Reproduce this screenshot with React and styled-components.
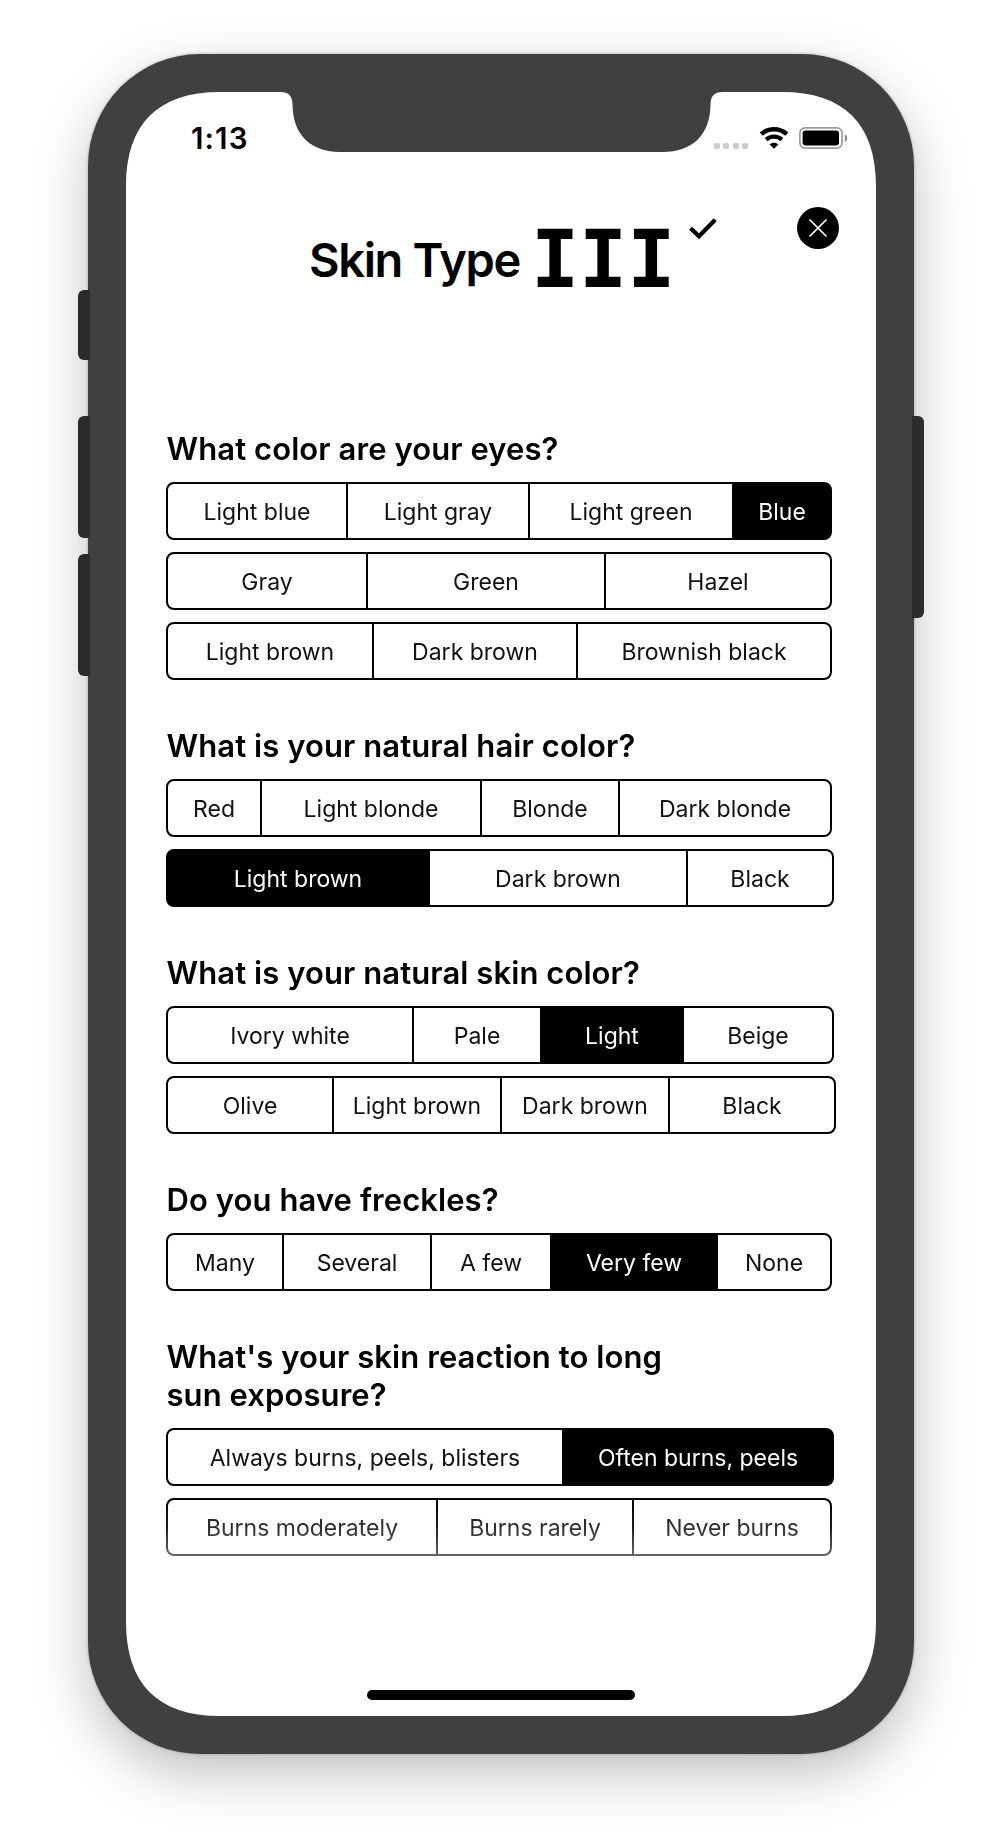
import React, { useState } from "react";
import styled, { createGlobalStyle } from "styled-components";

// width is the outer width of each segment, neighbours share a 2px border
const QUESTIONS = [
  {
    id: "eyes",
    title: "What color are your eyes?",
    rows: [
      [
        { label: "Light blue", width: 182 },
        { label: "Light gray", width: 184 },
        { label: "Light green", width: 206 },
        { label: "Blue", width: 100 },
      ],
      [
        { label: "Gray", width: 202 },
        { label: "Green", width: 240 },
        { label: "Hazel", width: 228 },
      ],
      [
        { label: "Light brown", width: 208 },
        { label: "Dark brown", width: 206 },
        { label: "Brownish black", width: 256 },
      ],
    ],
  },
  {
    id: "hair",
    title: "What is your natural hair color?",
    rows: [
      [
        { label: "Red", width: 96 },
        { label: "Light blonde", width: 222 },
        { label: "Blonde", width: 140 },
        { label: "Dark blonde", width: 214 },
      ],
      [
        { label: "Light brown", width: 264 },
        { label: "Dark brown", width: 260 },
        { label: "Black", width: 148 },
      ],
    ],
  },
  {
    id: "skin",
    title: "What is your natural skin color?",
    rows: [
      [
        { label: "Ivory white", width: 248 },
        { label: "Pale", width: 130 },
        { label: "Light", width: 144 },
        { label: "Beige", width: 152 },
      ],
      [
        { label: "Olive", width: 168 },
        { label: "Light brown", width: 170 },
        { label: "Dark brown", width: 170 },
        { label: "Black", width: 168 },
      ],
    ],
  },
  {
    id: "freckles",
    title: "Do you have freckles?",
    rows: [
      [
        { label: "Many", width: 118 },
        { label: "Several", width: 150 },
        { label: "A few", width: 122 },
        { label: "Very few", width: 168 },
        { label: "None", width: 116 },
      ],
    ],
  },
  {
    id: "reaction",
    title: "What's your skin reaction to long sun exposure?",
    rows: [
      [
        { label: "Always burns, peels, blisters", width: 398 },
        { label: "Often burns, peels", width: 272 },
      ],
      [
        { label: "Burns moderately", width: 272 },
        { label: "Burns rarely", width: 198 },
        { label: "Never burns", width: 200 },
      ],
    ],
  },
];

const App = () => {
  const [answers, setAnswers] = useState({
    eyes: "Blue",
    hair: "Light brown",
    skin: "Light",
    freckles: "Very few",
    reaction: "Often burns, peels",
  });

  const choose = (id, label) => setAnswers({ ...answers, [id]: label });

  return (
    <Page>
      <GlobalStyle />
      <Phone>
        <SideButton $side="left" $top={236} $height={70} />
        <SideButton $side="left" $top={362} $height={122} />
        <SideButton $side="left" $top={500} $height={122} />
        <SideButton $side="right" $top={362} $height={202} />

        <Screen>
          <StatusBar>
            <Time>1:13</Time>
            <StatusIcons>
              <SignalDots>
                <i />
                <i />
                <i />
                <i />
              </SignalDots>
              <WifiIcon />
              <BatteryIcon />
            </StatusIcons>
          </StatusBar>

          <Header>
            <Title>
              Skin Type <Numeral>III</Numeral>
            </Title>
            <CheckIcon />
            <CloseButton aria-label="Close">
              <svg width="18" height="18" viewBox="0 0 18 18">
                <path
                  d="M1 1L17 17M17 1L1 17"
                  stroke="#fff"
                  strokeWidth="1.7"
                  strokeLinecap="round"
                />
              </svg>
            </CloseButton>
          </Header>

          <Questions>
            {QUESTIONS.map((question) => (
              <Question key={question.id}>
                <QuestionTitle>{question.title}</QuestionTitle>
                <Rows>
                  {question.rows.map((row, index) => (
                    <Row key={index}>
                      {row.map(({ label, width }) => (
                        <Option
                          key={label}
                          $width={width}
                          $selected={answers[question.id] === label}
                          onClick={() => choose(question.id, label)}
                        >
                          {label}
                        </Option>
                      ))}
                    </Row>
                  ))}
                </Rows>
              </Question>
            ))}
          </Questions>

          <HomeIndicator />
        </Screen>
      </Phone>
    </Page>
  );
};

const WifiIcon = () => (
  <svg width="30" height="22" viewBox="0 0 30 22">
    <path
      d="M2.2 7.2C9.3 .6 20.7 .6 27.8 7.2"
      fill="none"
      stroke="#000"
      strokeWidth="4.4"
    />
    <path
      d="M7.1 12.6C11.6 8.6 18.4 8.6 22.9 12.6"
      fill="none"
      stroke="#000"
      strokeWidth="4.2"
    />
    <path d="M15 21.8L10.6 17.4C13 15.3 17 15.3 19.4 17.4Z" fill="#000" />
  </svg>
);

const BatteryIcon = () => (
  <svg width="49" height="22" viewBox="0 0 49 22">
    <rect
      x="0.9"
      y="0.9"
      width="42.2"
      height="20.2"
      rx="5.2"
      fill="none"
      stroke="#9b9b9b"
      strokeWidth="1.7"
    />
    <rect x="3.6" y="3.6" width="36.4" height="14.8" rx="2.8" fill="#000" />
    <path d="M45.8 7.2C49 8.6 49 13.6 45.8 15Z" fill="#8e8e8e" />
  </svg>
);

const CheckIcon = () => (
  <CheckSvg width="28" height="22" viewBox="0 0 28 22">
    <path
      d="M1.6 10.2L10 18.2L26.2 1.8"
      fill="none"
      stroke="#000"
      strokeWidth="4.2"
    />
  </CheckSvg>
);

const GlobalStyle = createGlobalStyle`
  * {
    box-sizing: border-box;
  }

  body {
    margin: 0;
    background: #fff;
    color: #000;
    font-family: Inter, "Liberation Sans", sans-serif;
  }

  button {
    font-family: inherit;
    cursor: pointer;
  }
`;

const Page = styled.div`
  display: flex;
  justify-content: center;
  width: 1002px;
  height: 1840px;
  padding-top: 54px;
  overflow: hidden;
`;

const Phone = styled.div`
  position: relative;
  width: 826px;
  height: 1700px;
  padding: 38px;
  border-radius: 112px;
  background: #404040;
  box-shadow: 0 20px 54px rgba(0, 0, 0, 0.25), 0 0 3px rgba(0, 0, 0, 0.3);
`;

const SideButton = styled.div`
  position: absolute;
  ${({ $side }) => $side}: -10px;
  top: ${({ $top }) => $top}px;
  width: 12px;
  height: ${({ $height }) => $height}px;
  border-radius: ${({ $side }) =>
    $side === "left" ? "6px 0 0 6px" : "0 6px 6px 0"};
  background: #2b2b2b;
`;

const Screen = styled.div`
  display: flex;
  flex-direction: column;
  width: 750px;
  height: 1624px;
  background: #fff;
  /* rounded display with the notch cut out of the top edge */
  clip-path: path(
    "M0 94C0 32 32 0 94 0H154C163 0 166.5 4 166.5 13C167 44 186 60 214 60H537C565 60 584 44 584.5 13C584.5 4 588 0 597 0H656C718 0 750 32 750 94V1530C750 1592 718 1624 656 1624H94C32 1624 0 1592 0 1530Z"
  );
`;

const StatusBar = styled.div`
  display: flex;
  justify-content: space-between;
  height: 94px;
  padding: 28px 28px 0 65px;
`;

const Time = styled.span`
  height: 36px;
  font-size: 29.5px;
  line-height: 37px;
  font-weight: 600;
  letter-spacing: 1.1px;
`;

const StatusIcons = styled.div`
  display: flex;
  align-items: flex-start;
  padding-top: 7px;
`;

const SignalDots = styled.div`
  display: flex;
  gap: 3.4px;
  margin: 16px 10.5px 0 0;

  i {
    width: 6px;
    height: 6px;
    border-radius: 2px;
    background: #cbcbcb;
  }

  & + svg {
    margin-right: 10.5px;
  }
`;

const Header = styled.header`
  display: flex;
  align-items: flex-start;
  height: 244.4px;
  padding: 21px 37px 0 183px;
`;

const Title = styled.h1`
  display: flex;
  align-items: baseline;
  gap: 11px;
  margin: 13px 0 0;
  font-size: 47px;
  line-height: 60px;
  font-weight: 600;
  letter-spacing: -1.35px;
  white-space: nowrap;
`;

const Numeral = styled.span`
  position: relative;
  top: 10px;
  font-family: "DejaVu Sans Mono", monospace;
  font-size: 80px;
  line-height: 60px;
  font-weight: 700;
  letter-spacing: 0;
`;

const CheckSvg = styled.svg`
  margin: 11px 0 0 13.5px;
`;

const CloseButton = styled.button`
  display: flex;
  align-items: center;
  justify-content: center;
  width: 42px;
  height: 42px;
  margin-left: auto;
  padding: 0;
  border: none;
  border-radius: 50%;
  background: #000;
`;

const Questions = styled.main`
  display: flex;
  flex-direction: column;
  gap: 46.8px;
  height: 1249.6px;
  padding-left: 40px;
  /* the list fades out towards the bottom of the screen */
  mask-image: linear-gradient(
    to bottom,
    #000 1070px,
    rgba(0, 0, 0, 0.88) 1098px,
    rgba(0, 0, 0, 0.6) 1126px,
    transparent 1210px
  );
`;

const Question = styled.section`
  display: flex;
  flex-direction: column;
  gap: 14px;
`;

const QuestionTitle = styled.h2`
  width: 540px;
  margin: 0;
  padding-left: 0.5px;
  font-size: 31px;
  line-height: 38px;
  font-weight: 600;
  letter-spacing: 0.08px;
`;

const Rows = styled.div`
  display: flex;
  flex-direction: column;
  gap: 12px;
`;

const Row = styled.div`
  display: flex;
`;

const Option = styled.button`
  flex: none;
  width: ${({ $width }) => $width}px;
  height: 58px;
  padding: 2px 0 0;
  border: 2px solid #000;
  background: ${({ $selected }) => ($selected ? "#000" : "#fff")};
  color: ${({ $selected }) => ($selected ? "#fff" : "#111")};
  font-size: 23px;
  letter-spacing: 0;
  white-space: nowrap;

  & + & {
    margin-left: -2px;
  }

  &:first-child {
    border-radius: 8px 0 0 8px;
  }

  &:last-child {
    border-radius: 0 8px 8px 0;
  }
`;

const HomeIndicator = styled.div`
  width: 268px;
  height: 10px;
  margin: 10px auto 0;
  border-radius: 5px;
  background: #000;
`;

export default App;
